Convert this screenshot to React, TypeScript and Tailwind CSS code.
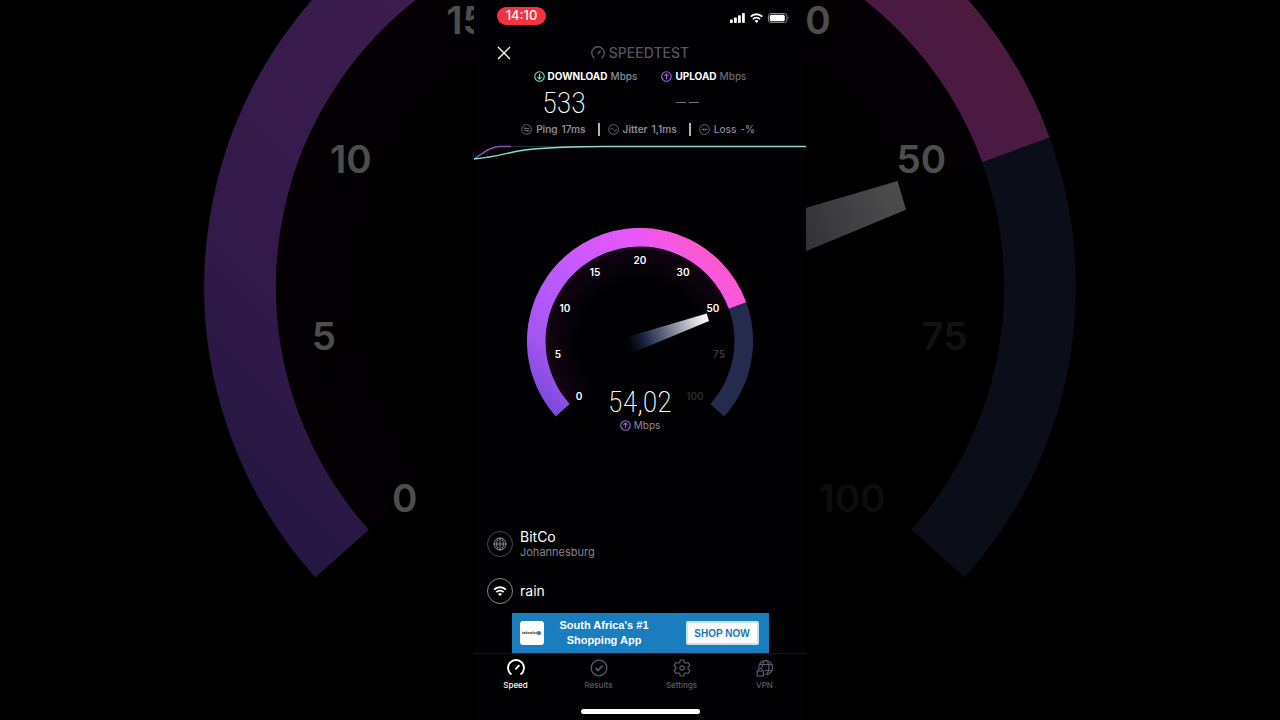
import { useId } from "react";

type Tick = { label: string; x: number; y: number; dim?: string };

const TICKS: Tick[] = [
  { label: "0", x: -61, y: 55 },
  { label: "5", x: -82, y: 13 },
  { label: "10", x: -75, y: -33 },
  { label: "15", x: -45, y: -69 },
  { label: "20", x: 0, y: -81 },
  { label: "30", x: 43, y: -69 },
  { label: "50", x: 73, y: -33 },
  { label: "75", x: 79, y: 13, dim: "#3a3a3c" },
  { label: "100", x: 55, y: 55, dim: "#2b2b2d" },
];

// The dial is drawn around its own centre at 0,0.
function Dial({ ticks }: { ticks: Tick[] }) {
  const id = useId();
  return (
    <g>
      <defs>
        <linearGradient id={`${id}arc`} gradientUnits="userSpaceOnUse" x1="-77" y1="77" x2="77" y2="-77">
          <stop offset="0" stopColor="#7f4bdc" />
          <stop offset="0.18" stopColor="#a556f2" />
          <stop offset="0.5" stopColor="#c25bff" />
          <stop offset="0.8" stopColor="#e657fb" />
          <stop offset="1" stopColor="#ff58cf" />
        </linearGradient>
        <radialGradient id={`${id}glow`} gradientUnits="userSpaceOnUse" cx="0" cy="0" r="95">
          <stop offset="0.65" stopColor="#2a0626" stopOpacity="0" />
          <stop offset="1" stopColor="#2a0626" stopOpacity="0.45" />
        </radialGradient>
        <linearGradient id={`${id}needle`} gradientUnits="userSpaceOnUse" x1="-12" y1="5" x2="68" y2="-24">
          <stop offset="0" stopColor="#151c36" stopOpacity="0" />
          <stop offset="0.22" stopColor="#1d2748" />
          <stop offset="0.5" stopColor="#70748a" />
          <stop offset="0.8" stopColor="#cfcfd8" />
          <stop offset="1" stopColor="#ffffff" />
        </linearGradient>
      </defs>
      <path d="M0 0 L-70.4 63 A94.5 94.5 0 1 1 88.8 -32.3 Z" fill={`url(#${id}glow)`} />
      <path d="M97.5 -35.5 A103.75 103.75 0 0 1 77.3 69.2" fill="none" stroke="#252b4f" strokeWidth="18.6" />
      <path d="M-77.3 69.2 A103.75 103.75 0 1 1 97.5 -35.5" fill="none" stroke={`url(#${id}arc)`} strokeWidth="18.6" />
      <path d="M-13 -4 L66.8 -27.4 L69 -20 L-8 12 Z" fill={`url(#${id}needle)`} />
      {ticks.map((t) => (
        <text
          key={t.label}
          x={t.x}
          y={t.y + 3.5}
          textAnchor="middle"
          fill={t.dim ?? "#ffffff"}
          className="text-[10px] font-semibold"
        >
          {t.label}
        </text>
      ))}
    </g>
  );
}

function ArrowCircle({ up, className }: { up?: boolean; className: string }) {
  return (
    <svg viewBox="0 0 12 12" className={`size-[11px] ${className}`} fill="none" stroke="currentColor" strokeWidth="1.2">
      <circle cx="6" cy="6" r="5.2" />
      <path d={up ? "M6 9V3.4M3.8 5.4 6 3.2l2.2 2.2" : "M6 3v5.6M3.8 6.6 6 8.8l2.2-2.2"} />
    </svg>
  );
}

function StatIcon({ d }: { d: string }) {
  return (
    <svg viewBox="0 0 12 12" className="size-[11px] text-[#6f6d7c]" fill="none" stroke="currentColor" strokeWidth="1">
      <circle cx="6" cy="6" r="5.3" />
      <path d={d} />
    </svg>
  );
}

function SpeedIcon({ className }: { className: string }) {
  return (
    <svg viewBox="0 0 18 18" className={className} fill="none" stroke="currentColor" strokeWidth="1.8">
      <path d="M4.5 15.6A8 8 0 1 1 13.5 15.6" />
      <path d="M8.4 10.4 12.4 6.2" />
    </svg>
  );
}

function WifiIcon({ className }: { className: string }) {
  return (
    <svg viewBox="0 0 16 12" className={className} fill="none" stroke="currentColor" strokeWidth="2.3">
      <path d="M.9 4.400a10 10 0 0 1 14.200 0" />
      <path d="M3.600 7.400a6.200 6.200 0 0 1 8.800 0" />
      <path d="M8 12 5.600 9.600a3.400 3.400 0 0 1 4.800 0Z" fill="currentColor" stroke="none" />
    </svg>
  );
}

function StatusBar() {
  return (
    <div className="flex h-[38px] items-start justify-between pt-[7px] pr-[16px] pl-[23px]">
      <span className="flex h-[18px] w-[49px] items-center justify-center rounded-full bg-[#f5333f] text-[13px] font-medium">
        14:10
      </span>
      <div className="flex h-[22px] items-center gap-[5px]">
        <svg viewBox="0 0 15 10" className="h-[10px] w-[15px]" fill="#fff">
          <rect x="0" y="6.5" width="2.8" height="3.5" rx="0.7" />
          <rect x="4" y="4.5" width="2.8" height="5.5" rx="0.7" />
          <rect x="8" y="2.3" width="2.8" height="7.7" rx="0.7" />
          <rect x="12" y="0" width="2.8" height="10" rx="0.7" />
        </svg>
        <WifiIcon className="h-[10px] w-[13px]" />
        <svg viewBox="0 0 22 10" className="h-[10px] w-[22px]">
          <rect x="0.5" y="0.5" width="18.4" height="9" rx="2.6" fill="none" stroke="#8a8a8e" />
          <rect x="1.8" y="1.8" width="15" height="6.4" rx="1.5" fill="#fff" />
          <path d="M20 3.4q1.400 1.600 0 3.200Z" fill="#8a8a8e" />
        </svg>
      </div>
    </div>
  );
}

function Header() {
  return (
    <header className="grid h-[30px] grid-cols-[1fr_auto_1fr] items-center px-[22px]">
      <button aria-label="Close" className="flex size-[15px] items-center justify-center">
        <svg viewBox="0 0 14 14" className="size-[14px]" fill="none" stroke="#fff" strokeWidth="1.3">
          <path d="M1 1 13 13M13 1 1 13" />
        </svg>
      </button>
      <div className="flex items-center gap-1 text-[#56535f]">
        <SpeedIcon className="size-[14px]" />
        <span className="text-sm font-medium">SPEEDTEST</span>
      </div>
    </header>
  );
}

function Results() {
  return (
    <section className="flex flex-col">
      <div className="flex justify-center gap-6">
        <div>
          <div className="flex h-4 items-center gap-[3px] text-[10px]">
            <ArrowCircle className="text-[#7fe3c4]" />
            <span className="font-bold">DOWNLOAD</span>
            <span className="font-medium text-[#8b8998]">Mbps</span>
          </div>
          <div className="flex h-9 w-[61px] items-center justify-center font-['Roboto_Condensed','Liberation_Sans_Narrow',Roboto,sans-serif] text-[30px] font-extralight">
            533
          </div>
        </div>
        <div>
          <div className="flex h-4 items-center gap-[3px] text-[10px]">
            <ArrowCircle up className="text-[#a65fe0]" />
            <span className="font-bold">UPLOAD</span>
            <span className="font-medium text-[#6c6a79]">Mbps</span>
          </div>
          <div className="flex h-9 w-[52px] items-center justify-center gap-[3px]">
            <span className="h-px w-[10px] bg-[#77767f]" />
            <span className="h-px w-[10px] bg-[#77767f]" />
          </div>
        </div>
      </div>
      <div className="flex h-[19px] items-center justify-center pr-1 text-[10px] font-semibold text-[#8b8998]">
        <div className="flex items-center gap-1">
          <StatIcon d="M9 4.9H3.4M5 3.2 3.3 4.9M3 7.1h5.6M7 8.8 8.7 7.1" />
          <span>Ping</span>
          <span>17ms</span>
        </div>
        <span className="mr-2 ml-3 h-[13px] w-[2px] bg-[#b4b4b8]" />
        <div className="flex items-center gap-1">
          <StatIcon d="M2.6 6.5C4 3.6 5.2 4.6 6 6s2 2.600 3.400-.5" />
          <span>Jitter</span>
          <span>1,1ms</span>
        </div>
        <span className="mr-2 ml-3 h-[13px] w-[2px] bg-[#b4b4b8]" />
        <div className="flex items-center gap-1 font-medium">
          <StatIcon d="M2.800 6h2.400M6.800 6h2.400M5.200 4.800v2.400M6.800 4.800v2.400" />
          <span>Loss</span>
          <span>-%</span>
        </div>
      </div>
      <svg viewBox="0 0 332 24" preserveAspectRatio="none" className="h-6 w-full" fill="none" strokeWidth="1.4">
        <path d="M36 7.500H130" stroke="#24303a" strokeWidth="1" />
        <path d="M0 20C8 15 15 8 25 7.500H37" stroke="#8d4fc4" />
        <path d="M0 20C25 18 38 12 55 10.500C75 8.500 95 7.500 130 7.500H332" stroke="#86dfc9" />
      </svg>
    </section>
  );
}

function Gauge() {
  return (
    <section className="flex flex-1 flex-col items-center justify-center">
      <div className="grid">
        <svg viewBox="-113 -113 226 190" className="col-start-1 row-start-1 h-[190px] w-[226px]">
          <Dial ticks={TICKS} />
        </svg>
        <span className="col-start-1 row-start-1 self-end text-center font-['Roboto_Condensed','Liberation_Sans_Narrow',Roboto,sans-serif] text-[30px] leading-8 font-extralight">
          54,02
        </span>
      </div>
      <div className="flex h-[15px] items-center gap-[3px] text-[10px] text-[#8b8998]">
        <ArrowCircle up className="text-[#a65fe0]" />
        Mbps
      </div>
    </section>
  );
}

function Servers() {
  return (
    <section className="flex flex-col gap-[19px] px-[13px] pt-8 pb-2">
      <div className="flex h-7 items-center gap-[7px]">
        <span className="flex size-[26px] items-center justify-center rounded-full border border-[#4b4b50] text-[#8a8a90]">
          <svg viewBox="0 0 14 14" className="size-[14px]" fill="none" stroke="currentColor">
            <circle cx="7" cy="7" r="6" />
            <ellipse cx="7" cy="7" rx="3.400" ry="6" />
            <path d="M7 1v12M1 7h12" />
          </svg>
        </span>
        <div>
          <p className="text-sm leading-4">BitCo</p>
          <p className="text-[11px] leading-[15px] text-[#85838c]">Johannesburg</p>
        </div>
      </div>
      <div className="flex h-7 items-center gap-[7px]">
        <span className="flex size-[26px] items-center justify-center rounded-full border border-[#87878c]">
          <WifiIcon className="h-[10px] w-[14px]" />
        </span>
        <p className="text-sm leading-4">rain</p>
      </div>
    </section>
  );
}

function AdBanner() {
  return (
    <aside className="mx-auto flex h-10 w-[257px] items-center bg-[#1a7dbd] pr-[10px] pl-2 font-['Liberation_Sans',Arial,sans-serif] font-bold">
      <span className="flex size-6 items-center justify-center rounded-[3px] bg-white text-[4px] text-[#2b2b2b]">
        takealot
        <span className="size-1 rounded-full bg-[#1a7dbd]" />
      </span>
      <p className="ml-4 text-center text-[11px] leading-[15px]">
        South Africa's #1
        <br />
        Shopping App
      </p>
      <button className="ml-auto h-6 w-[73px] rounded-[2px] border-2 border-[#c3e4f8] bg-white text-[10px] text-[#1a78b4]">
        SHOP NOW
      </button>
    </aside>
  );
}

function TabBar() {
  const tabs = [
    { label: "Speed", icon: <SpeedIcon className="size-[18px]" /> },
    {
      label: "Results",
      icon: (
        <svg viewBox="0 0 18 18" className="size-[18px]" fill="none" stroke="currentColor" strokeWidth="1.3">
          <circle cx="9" cy="9" r="7.800" />
          <path d="M5.500 9.200 8 11.600 12.500 6.600" strokeWidth="1.600" />
        </svg>
      ),
    },
    {
      label: "Settings",
      icon: (
        <svg viewBox="0 0 18 18" className="size-[18px]" fill="none" stroke="currentColor" strokeWidth="1.2" strokeLinejoin="round">
          <path d="M7.300 1h3.400l.6 2.500 1.400.8 2.400-.8 1.700 3-1.800 1.700v1.600l1.800 1.700-1.700 3-2.400-.8-1.400.8-.6 2.500H7.300l-.6-2.500-1.400-.8-2.400.8-1.700-3L3 9.800V8.200L1.200 6.500l1.700-3 2.400.8 1.400-.8Z" />
          <circle cx="9" cy="9" r="2.200" />
        </svg>
      ),
    },
    {
      label: "VPN",
      icon: (
        <svg viewBox="0 0 18 18" className="size-[18px]" fill="none" stroke="currentColor" strokeWidth="1.2">
          <path d="M2.600 8.500a7 7 0 1 1 6.800 7" />
          <path d="M6.300 8.500C6.300 4.500 8 1.500 9.600 1.500s3.300 3 3.300 7-1.700 7-3.300 7M3.500 5.500h12.200M8.500 11.500h7.200" />
          <rect x="1.200" y="12" width="6.200" height="5" />
          <path d="M2.600 12v-1.200a1.700 1.700 0 0 1 3.400 0V12" />
        </svg>
      ),
    },
  ];

  return (
    <nav className="grid h-[50px] grid-cols-4 border-t border-[#15151a]">
      {tabs.map((tab, i) => (
        <button
          key={tab.label}
          className={`flex flex-col items-center gap-[2px] pt-[5px] text-[8px] leading-3 font-medium ${i === 0 ? "text-white" : "text-[#5d586e]"}`}
        >
          {tab.icon}
          {tab.label}
        </button>
      ))}
    </nav>
  );
}

export default function App() {
  return (
    <div className="relative flex min-h-screen justify-center overflow-hidden bg-black font-['Inter',sans-serif] text-white">
      {/* enlarged, dimmed dial behind the app; its top label would fall off the page */}
      <svg
        viewBox="-166 -74.4 332 186.8"
        preserveAspectRatio="xMidYMid slice"
        className="absolute inset-0 size-full opacity-30"
        aria-hidden="true"
      >
        <Dial ticks={TICKS.filter((t) => t.label !== "20")} />
      </svg>
      <main className="relative flex w-full max-w-[332px] flex-col bg-[#010103]">
        <StatusBar />
        <Header />
        <Results />
        <Gauge />
        <Servers />
        <AdBanner />
        <TabBar />
        <div className="flex h-[17px] justify-center pt-[6px]">
          <span className="h-[5px] w-[119px] rounded-full bg-white" />
        </div>
      </main>
    </div>
  );
}
